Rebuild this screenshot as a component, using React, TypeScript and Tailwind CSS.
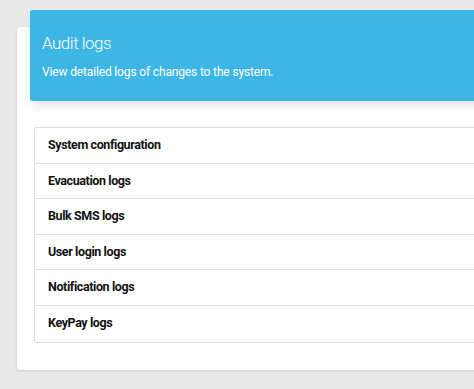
import React from 'react'

const logs = [
  'System configuration',
  'Evacuation logs',
  'Bulk SMS logs',
  'User login logs',
  'Notification logs',
  'KeyPay logs',
]

const App: React.FC = () => {
  return (
    <div className="h-[389px] w-[474px] overflow-hidden bg-[#e9e9e9] pl-[17px] pt-[27px]">
      <div className="flow-root w-[520px] h-[343px] bg-white rounded-[3px] shadow-[0_1px_3px_rgba(0,0,0,0.12)]">
        {/* Header */}
        <div className="-mt-[17px] ml-[13px] h-[91px] bg-[#3db6e6] rounded-[3px] shadow-[0_6px_10px_-3px_rgba(0,0,0,0.14)] px-[12px] pt-[23px] font-['Roboto',sans-serif] text-white">
          <h1 className="text-[17px] font-light tracking-[-0.5px] leading-[20px]">Audit logs</h1>
          <p className="mt-[11px] text-[12px] font-normal tracking-[-0.15px] leading-[16px]">
            View detailed logs of changes to the system.
          </p>
        </div>

        {/* Log list */}
        <div className="mt-[26px] ml-[17px] border border-[#dedede] rounded-[2px] font-['Roboto',sans-serif]">
          {logs.map((label, index) => (
            <div
              key={index}
              className={`h-[35.6px] flex items-center pl-[13px] text-[12.5px] font-bold tracking-[-0.4px] text-[#111] ${
                index < logs.length - 1 ? 'border-b border-[#dedede]' : ''
              }`}
            >
              {label}
            </div>
          ))}
        </div>
      </div>
    </div>
  )
}

export default App
